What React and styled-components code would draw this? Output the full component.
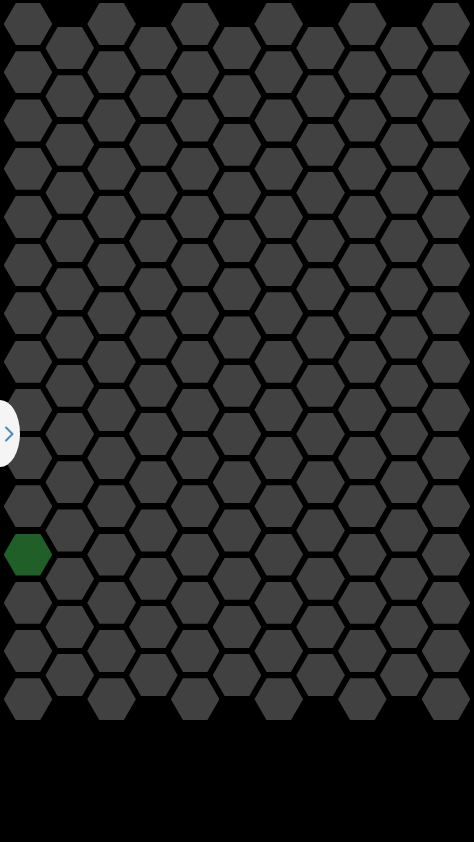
import React from 'react'
import styled, { createGlobalStyle } from 'styled-components'

// board geometry (flat-top hexes)
const hexWidth = 48.6
const hexHeight = 42.1
const rowGap = 6.15
const colPitch = 41.8
const COLUMNS = 11
const ACTIVE = { col: 0, row: 11 }

const GlobalStyle = createGlobalStyle`
  html, body {
    margin: 0;
    padding: 0;
    background: #000;
    font-family: "Roboto", "Liberation Sans", sans-serif;
  }
`

const Screen = styled.div`
  position: relative;
  width: 474px;
  height: 842px;
  background: #000;
  overflow: hidden;
`

const Board = styled.div`
  display: flex;
  align-items: flex-start;
  padding: 2.95px 0 0 3.7px;
`

const Column = styled.div`
  display: flex;
  flex-direction: column;
  gap: ${rowGap}px;
  flex: 0 0 ${hexWidth}px;
  padding-top: ${(p) => (p.$odd ? (hexHeight + rowGap) / 2 : 0)}px;

  & + & {
    margin-left: ${colPitch - hexWidth}px;
  }
`

const Hex = styled.div`
  width: ${hexWidth}px;
  height: ${hexHeight}px;
  background: ${(p) => (p.$active ? '#215f29' : '#414141')};
  clip-path: polygon(25% 0, 75% 0, 100% 50%, 75% 100%, 25% 100%, 0 50%);
`

const DrawerTab = styled.button`
  position: absolute;
  left: 0;
  top: 400px;
  width: 20px;
  height: 67px;
  padding: 0 0 0 4px;
  border: none;
  background: #f5f5f5;
  border-radius: 0 100% 100% 0 / 0 50% 50% 0;
  display: flex;
  align-items: center;
  cursor: pointer;

  svg {
    display: block;
  }
`

const Chevron = () => (
  <svg width="10" height="16" viewBox="0 0 10 16">
    <polyline
      points="2,1.5 8.5,8 2,14.5"
      fill="none"
      stroke="#4a8cb4"
      strokeWidth="2"
      strokeLinecap="round"
      strokeLinejoin="round"
    />
  </svg>
)

export default function App() {
  const columns = Array.from({ length: COLUMNS }, (_, c) => c)
  return (
    <Screen>
      <GlobalStyle />
      <Board>
        {columns.map((c) => {
          const odd = c % 2 === 1
          const rows = Array.from({ length: odd ? 14 : 15 }, (_, r) => r)
          return (
            <Column key={c} $odd={odd}>
              {rows.map((r) => (
                <Hex key={r} $active={c === ACTIVE.col && r === ACTIVE.row} />
              ))}
            </Column>
          )
        })}
      </Board>
      <DrawerTab aria-label="Open menu">
        <Chevron />
      </DrawerTab>
    </Screen>
  )
}
